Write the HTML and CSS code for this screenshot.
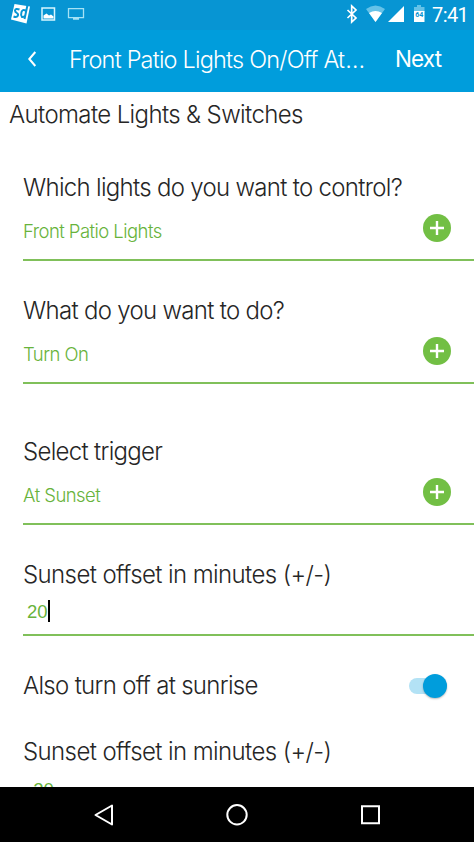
FILE: index.html
```
<!DOCTYPE html>
<html lang="en">
<head>
<meta charset="utf-8">
<title>Automate Lights &amp; Switches</title>
<link rel="stylesheet" href="styles.css">
</head>
<body>
<div class="screen">
  <header class="top">
    <div class="status">
      <svg class="status-left" width="90" height="30" viewBox="0 0 90 30">
        <path d="M14.500 4L30 6.500L26.500 23.500L11 19.500Z" fill="#fff"/>
        <path d="M19.500 9.500q-4-1.500-4.500 1q0 1.500 1.800 2.500t1 2.700q-1 2-4.300.8M27.500 5L24.500 19M25.500 10.500q-3-1.500-4 1.500t.5 5q2 .5 3.300-1.500" fill="none" stroke="#0795d3" stroke-width="2"/>
        <path d="M42 8h12.500v12H42z" fill="none" stroke="#d9f6ff" stroke-width="1.500"/>
        <path d="M43.500 18.500v-3l3-2 2.500 2 2-1 2.500 2v2z" fill="#fff"/>
        <path d="M68.500 8.700h15v9h-15zM73 19h6" fill="none" stroke="#a5e2f5" stroke-width="1.300"/>
      </svg>
      <svg class="status-right" width="86" height="30" viewBox="345 0 86 30">
        <path d="M347.500 10l8.500 8-4.300 4V6l4.300 4-8.500 8" fill="none" stroke="#fff" stroke-width="1.700"/>
        <path d="M366 9q9.500-7 19 0l-9.500 13z" fill="#65c2e8"/>
        <path d="M369 13q6.500-4 13 0l-6.500 9z" fill="#fff"/>
        <path d="M404 6v16h-16z" fill="#fff"/>
        <path d="M417 5h4v2h3.500v5h-10.500V7h3z" fill="#65c2e8"/>
        <path d="M414 11h10.500v11H414z" fill="#fff"/>
        <text x="419.200" y="17" class="battery">64</text>
      </svg>
      <span class="clock">7:41</span>
    </div>
    <div class="bar">
      <svg class="back" width="12" height="18" viewBox="0 0 12 18"><path d="M9.300 2L3.300 9l6 7" fill="none" stroke="#fff" stroke-width="2"/></svg>
      <h1 class="title">Front Patio Lights On/Off At<span class="dots">…</span></h1>
      <span class="next">Next</span>
    </div>
  </header>
  <main class="content">
    <h2 class="heading">Automate Lights &amp; Switches</h2>
    <section class="field lights">
      <div class="question">Which lights do you want to control?</div>
      <div class="row"><span class="value">Front Patio Lights</span>
        <svg class="plus" width="28" height="28" viewBox="0 0 28 28"><circle cx="14" cy="14" r="14" fill="#72bf44"/><path d="M14 7v14M7 14h14" stroke="#fff" stroke-width="2.400"/></svg></div>
    </section>
    <section class="field action">
      <div class="question">What do you want to do?</div>
      <div class="row"><span class="value">Turn On</span>
        <svg class="plus" width="28" height="28" viewBox="0 0 28 28"><circle cx="14" cy="14" r="14" fill="#72bf44"/><path d="M14 7v14M7 14h14" stroke="#fff" stroke-width="2.400"/></svg></div>
    </section>
    <section class="field trigger">
      <div class="question">Select trigger</div>
      <div class="row"><span class="value">At Sunset</span>
        <svg class="plus" width="28" height="28" viewBox="0 0 28 28"><circle cx="14" cy="14" r="14" fill="#72bf44"/><path d="M14 7v14M7 14h14" stroke="#fff" stroke-width="2.400"/></svg></div>
    </section>
    <section class="field offset">
      <div class="question minutes">Sunset offset in minutes (+/-)</div>
      <div class="input"><span class="number">20</span><i class="caret"></i></div>
    </section>
    <section class="toggle">
      <div class="question">Also turn off at sunrise</div>
      <div class="switch"><i class="knob"></i></div>
    </section>
    <section class="last">
      <div class="question minutes">Sunset offset in minutes (+/-)</div>
      <div class="number clipped">-20</div>
    </section>
  </main>
  <nav class="nav">
    <svg width="474" height="56" viewBox="0 0 474 56" fill="none" stroke="#fff" stroke-width="2"><path d="M112 18.500v19L95.500 28z" stroke-linejoin="round"/><circle cx="237" cy="27.800" r="9.700"/><path d="M362 19.300h17v17h-17z"/></svg>
  </nav>
</div>
</body>
</html>
```
FILE: styles.css
```
* { box-sizing: border-box; }
body { margin: 0; font-family: Inter, "Liberation Sans", sans-serif; font-weight: 300; color: #262626; background: #fff; }
.screen { width: 474px; height: 842px; display: flex; flex-direction: column; overflow: hidden; }
.top { height: 92px; flex: none; background: #009ddc; color: #fff; }
.status { height: 30px; display: flex; background: #0795d3; }
.status-left { flex: none; }
.status-right { margin-left: 255px; flex: none; }
.battery { font: 700 7px Roboto, sans-serif; fill: #0795d3; text-anchor: middle; }
.clock { font: 400 20px/30px Roboto, sans-serif; margin-left: 1px; letter-spacing: -.6px; white-space: nowrap; }
.bar { height: 62px; display: flex; align-items: flex-start; }
.back { margin: 20px 31px 0 26px; flex: none; }
.title { margin: 15px 0 0; width: 326px; flex: none; font-size: 23.500px; line-height: 30px; font-weight: 300; letter-spacing: -.8px; white-space: nowrap; }
.dots { letter-spacing: 0; margin-left: 1px; }
.next { margin-top: 14px; font-size: 22.500px; line-height: 30px; font-weight: 400; letter-spacing: -.85px; }
.content { height: 695px; flex: none; overflow: hidden; }
.heading { margin: 8px 0 0 9px; font-size: 24px; line-height: 30px; font-weight: 300; letter-spacing: -.62px; white-space: nowrap; }
.field { margin-left: 23px; border-bottom: 2px solid #80c05a; }
.question { font-size: 24px; line-height: 30px; letter-spacing: -.7px; white-space: nowrap; }
.minutes { letter-spacing: -.6px; }
.lights { margin-top: 43px; height: 88px; }
.action { margin-top: 35px; height: 88px; }
.trigger { margin-top: 53px; height: 88px; }
.offset { margin-top: 35px; height: 76px; }
.row { height: 28px; margin-top: 11px; padding-right: 23px; display: flex; justify-content: space-between; }
.value { font-size: 18.500px; line-height: 24px; margin-top: 5px; color: #68b33b; letter-spacing: -.55px; white-space: nowrap; }
.plus { flex: none; }
.input { display: flex; margin: 10px 0 0 4px; }
.number { font-family: "Liberation Sans", sans-serif; font-size: 18.500px; line-height: 24px; font-weight: 400; color: #68b33b; }
.caret { width: 2px; height: 22px; background: #000; }
.toggle { display: flex; justify-content: space-between; margin: 35px 27px 0 23px; }
.switch { width: 38px; height: 16px; margin-top: 7px; border-radius: 8px; background: #b3e2f5; display: flex; justify-content: flex-end; align-items: center; }
.knob { width: 24px; height: 24px; flex: none; border-radius: 50%; background: #009ddc; box-shadow: 0 1px 2px #0004; }
.last { margin: 36px 0 0 23px; }
.clipped { margin: 11px 0 0 4px; }
.nav { height: 55px; flex: none; background: #000; }
.nav svg { display: block; }
```
